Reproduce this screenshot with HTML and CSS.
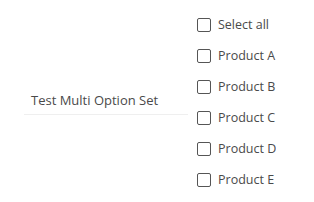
FILE: index.html
```html
<!DOCTYPE html>
<html lang="en">
<head>
    <meta charset="UTF-8">
    <title>Test Multi Option Set</title>
    <link rel="stylesheet" href="styles.css">
</head>
<body>
    <div class="page">
        <!-- Поле -->
        <div class="field">
            <div class="field-label">Test Multi Option Set</div>
        </div>

        <!-- Выпадающий список -->
        <div class="options">
            <label class="option"><span class="box"></span><span class="option-text">Select all</span></label>
            <label class="option"><span class="box"></span><span class="option-text">Product A</span></label>
            <label class="option"><span class="box"></span><span class="option-text">Product B</span></label>
            <label class="option"><span class="box"></span><span class="option-text">Product C</span></label>
            <label class="option"><span class="box"></span><span class="option-text">Product D</span></label>
            <label class="option"><span class="box"></span><span class="option-text">Product E</span></label>
        </div>
    </div>
</body>
</html>
```

FILE: styles.css
```css
* {
    margin: 0;
    padding: 0;
    box-sizing: border-box;
    font-family: "Open Sans", "Noto Sans", sans-serif;
}

body {
    background: #fff;
    color: #444;
}

.page {
    display: flex;
    height: 202px;
}

.field {
    margin-left: 24px;
    width: 164px;
    padding-top: 91px;
}

.field-label {
    font-size: 13px;
    line-height: 18px;
    padding: 0 0 5px 7px;
    border-bottom: 1px solid #efefef;
    color: #4a4a4a;
}

.options {
    margin-left: 9px;
    width: 79px;
    padding-top: 9px;
    overflow: hidden;
}

.option {
    display: flex;
    align-items: center;
    gap: 7px;
    height: 31px;
    white-space: nowrap;
}

.box {
    flex: none;
    width: 14px;
    height: 14px;
    border: 1px solid #555;
    border-radius: 2px;
}

.option-text {
    font-size: 12.5px;
    color: #4a4a4a;
}
```
